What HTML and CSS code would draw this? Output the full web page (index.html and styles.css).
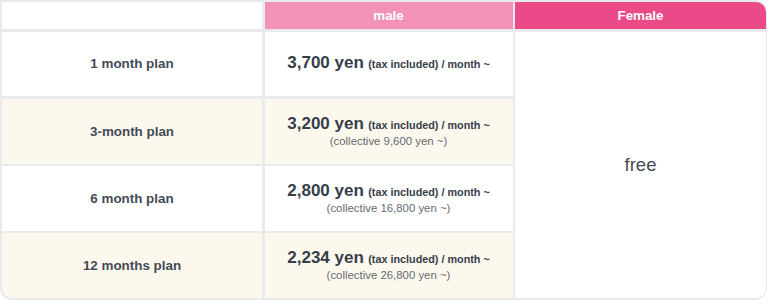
FILE: index.html
```html
<!DOCTYPE html>
<html>
<head>
<meta charset="utf-8">
<link rel="stylesheet" href="styles.css">
</head>
<body>
<div class="table">
  <div class="cell head blank"></div>
  <div class="cell head male">male</div>
  <div class="cell head female">Female</div>

  <div class="cell plan">1 month plan</div>
  <div class="cell price"><div class="line"><span class="yen">3,700 yen</span> <span class="tax">(tax included) / month ~</span></div></div>
  <div class="cell free">free</div>

  <div class="cell plan cream">3-month plan</div>
  <div class="cell price cream"><div class="line"><span class="yen">3,200 yen</span> <span class="tax">(tax included) / month ~</span></div><div class="coll">(collective 9,600 yen ~)</div></div>

  <div class="cell plan">6 month plan</div>
  <div class="cell price"><div class="line"><span class="yen">2,800 yen</span> <span class="tax">(tax included) / month ~</span></div><div class="coll">(collective 16,800 yen ~)</div></div>

  <div class="cell plan cream last-left">12 months plan</div>
  <div class="cell price cream"><div class="line"><span class="yen">2,234 yen</span> <span class="tax">(tax included) / month ~</span></div><div class="coll">(collective 26,800 yen ~)</div></div>
</div>
</body>
</html>
```

FILE: styles.css
```css
html, body {
  margin: 0;
  padding: 0;
  background: #ffffff;
}
body {
  font-family: "Liberation Sans", Arial, sans-serif;
}
.table {
  width: 767px;
  height: 300px;
  box-sizing: border-box;
  background: #e8eaee;
  border-radius: 0 12px 12px 12px;
  padding: 2px 1px 2px 2px;
  display: grid;
  grid-template-columns: 260px 248px 1fr;
  grid-template-rows: 27px repeat(4, 1fr);
  column-gap: 2.5px;
  row-gap: 2.5px;
}
.cell {
  background: #ffffff;
  display: flex;
  align-items: center;
  justify-content: center;
  text-align: center;
}
.head {
  color: #ffffff;
  font-weight: bold;
  font-size: 13.3px;
}
.blank { background: #ffffff; }
.male { background: #f192b6; }
.female {
  background: #ea4b88;
  border-radius: 0 10px 0 0;
}
.free {
  grid-column: 3;
  grid-row: 2 / span 4;
  font-size: 18.5px;
  color: #454c55;
  border-radius: 0 0 10px 0;
}
.plan {
  font-weight: bold;
  font-size: 13.4px;
  color: #434b56;
}
.cream { background: #fdf8ed; }
.last-left { border-radius: 0 0 0 10px; }
.price {
  flex-direction: column;
  color: #363e4a;
}
.line {
  line-height: 17px;
  white-space: nowrap;
}
.yen {
  font-weight: bold;
  font-size: 17px;
}
.tax {
  font-weight: bold;
  font-size: 10.8px;
}
.coll {
  font-size: 11.4px;
  color: #666b72;
  line-height: 13px;
  margin-top: 1px;
}
```
